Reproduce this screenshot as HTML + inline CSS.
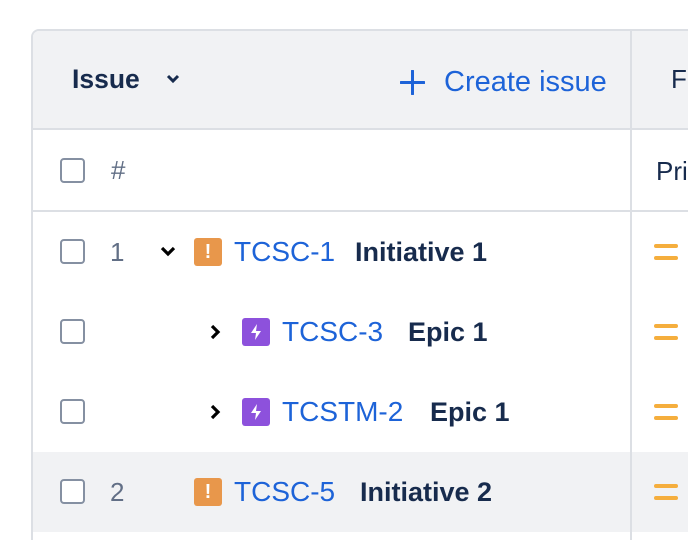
<!DOCTYPE html>
<html><head><meta charset="utf-8"><style>
*{margin:0;padding:0;box-sizing:border-box}
html,body{width:688px;height:540px;overflow:hidden}
body{background:#fff;position:relative;font-family:"Liberation Sans",Arial,sans-serif;font-size:26px;color:#172b4d}
.a{position:absolute;white-space:nowrap;line-height:30px}
.cb{position:absolute;left:60px;width:25px;height:25px;border:2px solid #8590a2;border-radius:4px;background:#fff}
.lk{color:#1d63d8;font-size:28px}
.t{color:#172b4d;font-weight:bold;font-size:27px}
.g{color:#626f86}
.ico{position:absolute;width:28px;height:28px;border-radius:3px}
.ini{background:#e8974b}
.ep{background:#8d51dc}
.pr{position:absolute;left:654px;width:24px;height:16px}
.pr:before,.pr:after{content:"";position:absolute;left:0;width:24px;height:4px;border-radius:2px;background:#f5ae3d}
.pr:before{top:0}.pr:after{top:12px}
</style></head><body>
<div style="position:absolute;left:31px;top:29px;width:680px;height:511px;border:2px solid #dcdfe4;border-radius:8px 0 0 0;border-right:none;border-bottom:none"></div>
<div style="position:absolute;left:33px;top:31px;width:655px;height:97px;background:#f1f2f4;border-top-left-radius:6px"></div>
<div style="position:absolute;left:33px;top:128px;width:655px;height:2px;background:#dcdfe4"></div>
<div style="position:absolute;left:33px;top:210px;width:655px;height:2px;background:#dcdfe4"></div>
<div style="position:absolute;left:33px;top:452px;width:655px;height:80px;background:#f1f2f4"></div>
<div style="position:absolute;left:630px;top:31px;width:2px;height:509px;background:#dcdfe4"></div>

<div class="a" style="left:72px;top:64px;font-weight:bold;font-size:26.5px">Issue</div>
<svg class="a" style="left:165px;top:73px" width="16" height="12" viewBox="0 0 16 12"><path d="M3 3l5 5 5-5" stroke="#172b4d" stroke-width="3" fill="none"/></svg>
<svg class="a" style="left:400px;top:70px" width="25" height="25" viewBox="0 0 25 25"><path d="M12.5 1v23M1 12.5h23" stroke="#1d63d8" stroke-width="3" stroke-linecap="round"/></svg>
<div class="a lk" style="left:444px;top:67px;font-size:29px">Create issue</div>
<div class="a" style="left:671px;top:64px">F</div>

<div class="cb" style="top:158px"></div>
<div class="a g" style="left:111px;top:155px">#</div>
<div class="a" style="left:656px;top:156px">Pri</div>

<div class="cb" style="top:239px"></div>
<div class="a g" style="left:110px;top:237px">1</div>
<svg class="a" style="left:160px;top:246px" width="16" height="12" viewBox="0 0 16 12"><path d="M2 2l6 6 6-6" stroke="#000" stroke-width="3.2" fill="none"/></svg>
<div class="ico ini" style="left:194px;top:238px"></div>
<div class="a" style="left:194px;top:238px;width:28px;text-align:center;color:#fff;font-weight:bold;font-size:20px;line-height:28px">!</div>
<div class="a lk" style="left:234px;top:237px">TCSC-1</div>
<div class="a t" style="left:355px;top:237px">Initiative 1</div>
<div class="pr" style="top:244px"></div>

<div class="cb" style="top:319px"></div>
<svg class="a" style="left:210px;top:324px" width="12" height="16" viewBox="0 0 12 16"><path d="M2 2l6 6-6 6" stroke="#000" stroke-width="3.2" fill="none"/></svg>
<div class="ico ep" style="left:242px;top:318px"></div>
<svg class="a" style="left:242px;top:318px" width="28" height="28" viewBox="0 0 28 28"><path d="M15 6l-6 9h5l-1 7 6-9h-5z" fill="#fff"/></svg>
<div class="a lk" style="left:282px;top:317px">TCSC-3</div>
<div class="a t" style="left:408px;top:317px">Epic 1</div>
<div class="pr" style="top:324px"></div>

<div class="cb" style="top:399px"></div>
<svg class="a" style="left:210px;top:404px" width="12" height="16" viewBox="0 0 12 16"><path d="M2 2l6 6-6 6" stroke="#000" stroke-width="3.2" fill="none"/></svg>
<div class="ico ep" style="left:242px;top:398px"></div>
<svg class="a" style="left:242px;top:398px" width="28" height="28" viewBox="0 0 28 28"><path d="M15 6l-6 9h5l-1 7 6-9h-5z" fill="#fff"/></svg>
<div class="a lk" style="left:282px;top:397px">TCSTM-2</div>
<div class="a t" style="left:430px;top:397px">Epic 1</div>
<div class="pr" style="top:404px"></div>

<div class="cb" style="top:479px"></div>
<div class="a g" style="left:110px;top:477px">2</div>
<div class="ico ini" style="left:194px;top:478px"></div>
<div class="a" style="left:194px;top:478px;width:28px;text-align:center;color:#fff;font-weight:bold;font-size:20px;line-height:28px">!</div>
<div class="a lk" style="left:234px;top:477px">TCSC-5</div>
<div class="a t" style="left:360px;top:477px">Initiative 2</div>
<div class="pr" style="top:484px"></div>
</body></html>
